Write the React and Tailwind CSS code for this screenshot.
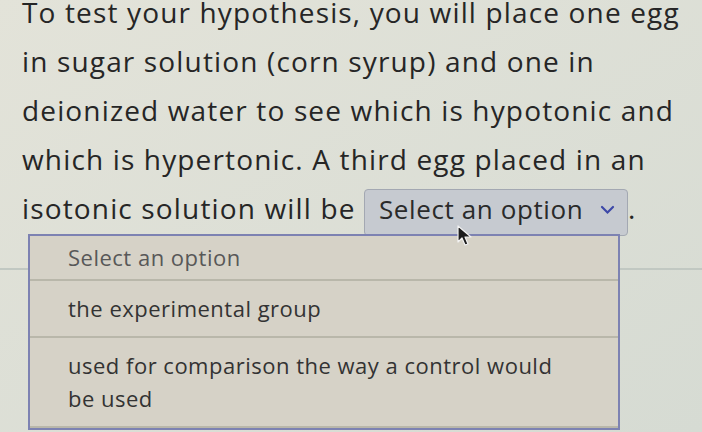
import React from 'react';

const options = [
  { label: 'Select an option', muted: true },
  { label: 'the experimental group' },
  { label: 'used for comparison the way a control would be used' },
];

const Cursor = () => (
  <svg className="absolute left-[457px] top-[225px]" width="16" height="22" viewBox="0 0 16 22">
    <path d="M1 1 L1 17 L5 13 L8 20 L11 19 L8 12 L14 12 Z" fill="#1c1c1c" stroke="#f2f2f2" strokeWidth="1.2" strokeLinejoin="round" />
  </svg>
);

const App = () => {
  return (
    <div
      className="relative h-[432px] w-[702px] overflow-hidden bg-linear-to-br from-[#e3e3d9] to-[#d6dbd3] text-[#262626]"
      style={{ fontFamily: '"Open Sans", "Liberation Sans", sans-serif' }}
    >
      {/* Question text */}
      <p className="mt-[-12px] w-[702px] pl-[22px] pr-[3px] text-[28px] leading-[49px] tracking-[1.15px]">
        To test your hypothesis, you will place one egg in sugar solution (corn syrup) and one in deionized
        water to see which is hypotonic and which is hypertonic. A third egg placed in an isotonic solution
        will be{' '}
        <span className="relative inline-flex h-[47px] w-[264px] items-start justify-between rounded-[4px] border border-[#a3a8b2] bg-[#c6cad0] pl-[14px] pr-[12px] pt-[4px] align-baseline text-[26px] leading-[30px] tracking-[0.6px] text-[#2a2a2a]">
          Select an option
          <svg className="mt-[11px]" width="15" height="10" viewBox="0 0 15 10">
            <path d="M2 2 L7.5 7.5 L13 2" fill="none" stroke="#3d48a8" strokeWidth="2.2" strokeLinecap="round" />
          </svg>
        </span>
        .
      </p>

      {/* Page divider behind the dropdown */}
      <div className="absolute left-0 right-0 top-[268px] h-[2px] bg-[#c1c8c2]" />

      {/* Open dropdown list */}
      <div className="absolute left-[28px] top-[234px] w-[592px] border-2 border-[#7d82b2] bg-[#d6d2c7] text-[22px] tracking-[0.5px] text-[#333333]">
        {options.map((o, i) => (
          <div
            key={i}
            className={`border-b-2 border-[#b9b7aa] pl-[38px] pr-[40px] leading-[33px] ${
              i === 0 ? 'pb-[5px] pt-[5px] text-[#585858]' : 'py-[11px]'
            }`}
          >
            {o.label}
          </div>
        ))}
      </div>

      <Cursor />
    </div>
  );
};

export default App;
